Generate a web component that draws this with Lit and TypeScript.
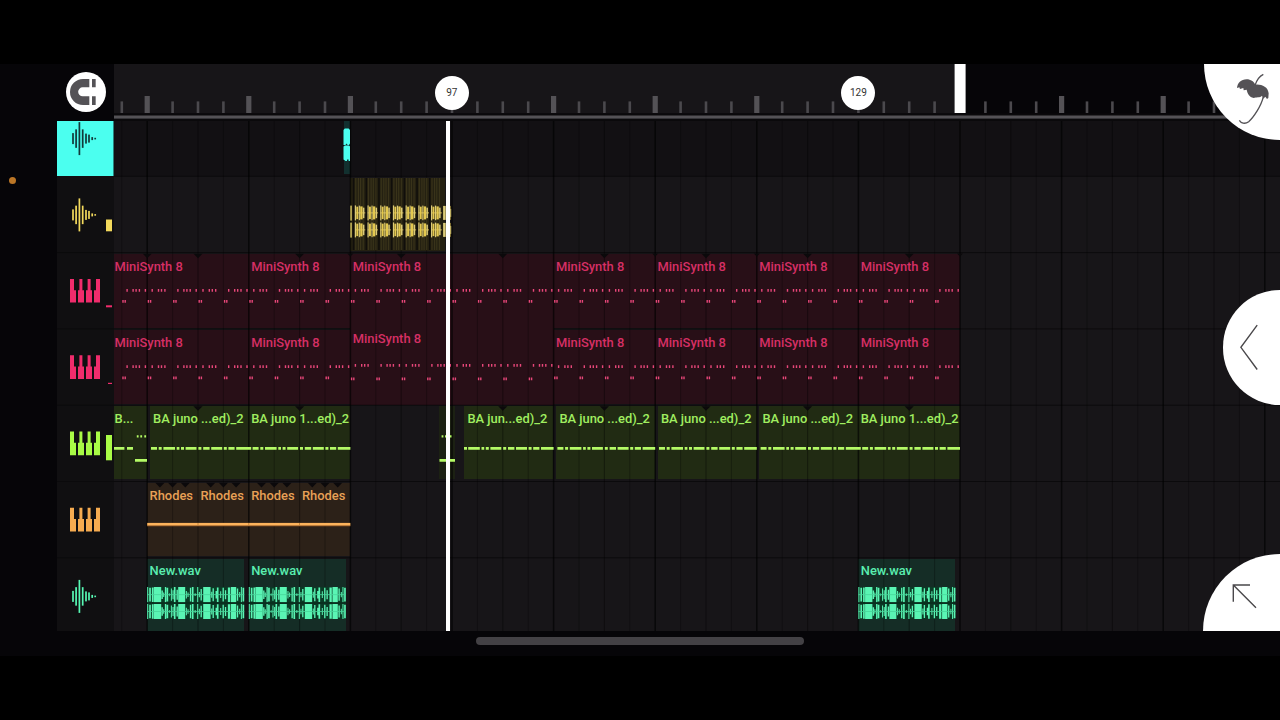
import { LitElement, html, svg, css } from "lit";
import { customElement } from "lit/decorators.js";

interface Clip { from: number; to: number; label?: string; pad?: number; lift?: boolean; dim?: boolean }
interface Track { kind: "wave" | "keys"; tone: string; color: string; clips: Clip[]; meter?: number[]; on?: boolean }

const LEFT = 114;
const ORIGIN = 147.2;
const BEAT = 25.4;
const bar = (n: number) => ORIGIN + n * BEAT * 4;

const synth = (lifted: boolean): Clip[] => [
  { from: LEFT, to: bar(1), label: "MiniSynth 8", pad: 0.5 },
  { from: bar(1), to: bar(2), label: "MiniSynth 8" },
  { from: bar(2), to: bar(4), label: "MiniSynth 8", lift: lifted },
  { from: bar(4), to: bar(5), label: "MiniSynth 8" },
  { from: bar(5), to: bar(6), label: "MiniSynth 8" },
  { from: bar(6), to: bar(7), label: "MiniSynth 8" },
  { from: bar(7), to: bar(8), label: "MiniSynth 8" },
];

const TRACKS: Track[] = [
  { kind: "wave", tone: "cyan", color: "#4bffef", on: true, clips: [{ from: 344, to: 350 }] },
  { kind: "wave", tone: "yellow", color: "#f3d95c", meter: [219.5, 11.8, 106, 6], clips: [{ from: 350.4, to: 445 }] },
  { kind: "keys", tone: "pink", color: "#f02c6c", meter: [305.3, 2, 106, 6], clips: synth(false) },
  { kind: "keys", tone: "pink", color: "#f02c6c", meter: [382.8, 1.2, 108, 4], clips: synth(true) },
  {
    kind: "keys", tone: "green", color: "#a9fb46", meter: [435, 25.3, 106, 6],
    clips: [
      { from: LEFT, to: 147, label: "B...", pad: 0.5 },
      { from: 150, to: bar(1), label: "BA juno ...ed)_2", pad: 3 },
      { from: bar(1), to: bar(2), label: "BA juno 1...ed)_2" },
      { from: 439.5, to: 455, dim: true },
      { from: 464, to: 553, label: "BA jun...ed)_2", pad: 3.4 },
      { from: 556.4, to: 655, label: "BA juno ...ed)_2", pad: 3 },
      { from: 658, to: 756.6, label: "BA juno ...ed)_2", pad: 3 },
      { from: 759.5, to: bar(7), label: "BA juno ...ed)_2", pad: 3 },
      { from: bar(7), to: bar(8), label: "BA juno 1...ed)_2" },
    ],
  },
  {
    kind: "keys", tone: "orange", color: "#f6ab50",
    clips: [0, 0.5, 1, 1.5].map((n) => ({ from: bar(n), to: bar(n + 0.5), label: "Rhodes" })),
  },
  {
    kind: "wave", tone: "teal", color: "#57f8b4",
    clips: [0, 1, 7].map((n) => ({ from: bar(n), to: bar(n) + 97, label: "New.wav" })),
  },
];

const rowLine = (i: number) => 176.3 + (i - 1) * 76.3;

/* start, width and relative amplitude of each burst, in thirds of a pixel */
const BURSTS = [
  [0, 3, 1], [6, 5, 0.9], [14, 5, 0.95], [20, 22, 1], [43, 4, 0.55], [48, 3, 0.3], [53, 4, 1], [58, 5, 0.9],
  [66, 2, 0.2], [71, 3, 0.8], [76, 3, 0.6], [80, 5, 1], [88, 4, 0.65], [93, 21, 1], [116, 3, 0.5], [121, 3, 0.3],
  [128, 4, 0.9], [134, 5, 1], [142, 4, 0.15], [150, 3, 1], [155, 3, 0.35], [160, 4, 0.75], [168, 22, 1],
  [192, 3, 0.4], [196, 4, 0.85], [205, 4, 0.5], [209, 5, 0.95], [219, 3, 0.45], [226, 4, 0.9], [233, 4, 0.6],
  [242, 7, 0.95], [251, 16, 1], [269, 4, 0.8], [276, 3, 0.35], [281, 3, 1], [286, 5, 0.9],
];
const TOP_NOTES = [5, 11.3, 14.3, 17.7, 30.7, 36.7, 39.7, 43, 49];

@customElement("app-root")
export class AppRoot extends LitElement {
  static styles = css`
    :host { display: block; width: 1280px; height: 720px; background: #000; overflow: hidden;
      font-family: Roboto, "Liberation Sans", sans-serif; }
    .screen { box-sizing: border-box; height: 720px; padding: 64px 0; }
    .app { position: relative; height: 592px; display: grid; grid-template-columns: 57px 57px 1fr;
      grid-template-rows: 57px 510px 25px; background: #060508; overflow: hidden; }
    .corner { grid-column: 2; display: flex; justify-content: center; align-items: flex-start; padding-top: 8px; }
    .magnet { width: 40px; height: 40px; border-radius: 50%; background: #fff; }
    svg { display: block; }
    .ruler { grid-column: 3; }
    .heads { grid-column: 2; grid-row: 2; }
    .lanes { grid-column: 3; grid-row: 2; display: grid; overflow: hidden; }
    .stack, .marks { grid-area: 1 / 1; }
    .stack { display: flex; flex-direction: column; min-height: 0; min-width: 0; }
    .lane { flex: none; height: 76.3px; display: flex; align-items: flex-start; background: #171518; }
    .lane.cyan { height: 55.3px; background: #121013; }
    .clip { box-sizing: border-box; flex: none; height: 73px; margin-top: 1.3px; overflow: hidden; }
    .lane.cyan .clip { height: 53px; margin-top: 0; }
    .label { position: relative; z-index: 1; display: block; white-space: nowrap; font-size: 12.9px; font-weight: 500;
      line-height: 16px; padding-top: 4.2px; }
    .pink .label, .orange .label { padding-top: 5px; }
    .pink .lift .label { padding-top: 4.2px; }
    .cyan .clip { background: #12302f; }
    .yellow .clip { background: #242011; }
    .pink .clip { background: #280f17; color: #d62f65; height: 74px; }
    .pink .clip.lift { height: 78px; margin-top: -2.3px; }
    .green .clip { background: #212b13; color: #a0ee60; }
    .green .clip.dim { background: #1c2113; }
    .orange .clip { background: #2c2118; color: #e8a056; }
    .teal .clip { background: #152d26; color: #5aeeb0; }
    .pill { position: absolute; top: 11.5px; width: 34px; height: 34px; border-radius: 50%; background: #fff;
      color: #333; font-size: 10px; line-height: 34px; text-align: center; }
    .p97 { left: 434.8px; }
    .p129 { left: 841.4px; }
    .playhead { position: absolute; left: 446px; top: 57px; width: 4px; height: 510px; background: #fff; }
    .home { grid-column: 1 / -1; grid-row: 3; justify-self: center; width: 328px; height: 8px; margin-top: 6px;
      border-radius: 4px; background: #434145; }
    .dot { position: absolute; left: 9px; top: 113px; width: 7px; height: 7px; border-radius: 50%; background: #bb7626; }
    .bubble { position: absolute; right: 0; background: #fff; overflow: hidden; }
    .palm { top: 0; width: 76px; height: 76px; border-bottom-left-radius: 76px; }
    .back { top: 225.5px; width: 57.5px; height: 115px; border-radius: 57.5px 0 0 57.5px; }
    .expand { top: 490px; width: 77px; height: 77px; border-top-left-radius: 77px; }
  `;

  private ruler() {
    const ticks = [];
    for (let k = -1; k < 44; k++) {
      const big = k % 4 === 0 && k !== 12 && k !== 28;
      const x = ORIGIN + k * BEAT;
      ticks.push(big
        ? svg`<rect x=${x - 2.6} y="96" width="5.2" height="17" fill="#545256"/>`
        : svg`<rect x=${x - 1.3} y="101.4" width="2.6" height="11.6" fill="#4b494d"/>`);
    }
    return html`<svg class="ruler" width="1166" height="57" viewBox="114 64 1166 57">
      <rect x="114" y="64" width="846" height="49.5" fill="#171518"/>
      <rect x="114" y="113.5" width="1166" height="7.5" fill="#0a090b"/>
      ${ticks}
      <rect x="114" y="115.5" width="1166" height="3.1" fill="#545256"/>
      <rect x="954.6" y="64" width="11" height="49" fill="#fff"/>
    </svg>`;
  }

  private icon(t: Track, i: number) {
    const cy = rowLine(i) + 38.6;
    if (t.kind === "keys") {
      const y = cy - 12.3;
      return svg`<path fill=${t.color} transform=${`translate(70 ${y})`}
        d="M0 0H4V11.3H6V23.7H0ZM9.4 0H12.4V11.3H14V23.7H8V11.3H9.4ZM17.6 0H20.6V11.3H22V23.7H16V11.3H17.6ZM26 0H30V23.7H24V11.3H26Z"/>`;
    }
    const bars = [[73, 11], [76.1, 18.5], [79.4, 33], [82.7, 18.5], [86, 10], [89, 8], [92.2, 3], [95.2, 1.6]];
    return bars.map(([x, h]) => svg`<rect x=${x - 0.85} y=${cy - h / 2} width="1.7" height=${h}
      fill=${t.on ? "#12393a" : t.color}/>`);
  }

  private heads() {
    return html`<svg class="heads" width="57" height="510" viewBox="57 121 57 510">
      <rect x="57" y="176" width="57" height="455" fill="#100f11"/>
      <rect x="57" y="121" width="56.5" height="55" fill="#4bffef"/>
      ${[2, 3, 4, 5, 6].map((i) => svg`<rect x="57" y=${rowLine(i) - 0.5} width="57" height="1" fill="#0b0a0c"/>`)}
      ${TRACKS.map((t, i) => svg`${this.icon(t, i)}${t.meter
        ? svg`<rect x=${t.meter[2]} y=${t.meter[0]} width=${t.meter[3]} height=${t.meter[1]} fill=${t.color}/>` : ""}`)}
    </svg>`;
  }

  private lane(t: Track) {
    let end = LEFT;
    return html`<div class="lane ${t.tone}">${t.clips.map((c) => {
      const gap = c.from - end;
      end = c.to;
      return html`<div class="clip ${c.lift ? "lift" : ""} ${c.dim ? "dim" : ""}"
        style="margin-left:${gap.toFixed(2)}px;width:${(c.to - c.from).toFixed(2)}px;padding-left:${c.label ? c.pad ?? 2.4 : 0}px"
        >${c.label ? html`<span class="label">${c.label}</span>` : ""}</div>`;
    })}</div>`;
  }

  private gridLines() {
    const out = [];
    for (let k = -1; k < 45; k++) {
      const x = ORIGIN + k * BEAT;
      const [w, o] = k % 4 === 0 ? [1.6, 0.62] : k % 2 === 0 ? [1.2, 0.34] : [1, 0.28];
      out.push(svg`<rect x=${x - w / 2} y="121" width=${w} height="510" fill="#000" opacity=${o}/>`);
    }
    for (let i = 1; i < 7; i++) {
      const y = rowLine(i);
      const split = i === 3;
      out.push(svg`<rect x="114" y=${y - 0.5} width=${split ? 236 : 1166} height="1" fill="#000" opacity=".5"/>`);
      if (split) out.push(svg`<rect x="554" y=${y - 0.5} width="726" height="1" fill="#000" opacity=".5"/>`);
    }
    return out;
  }

  private notches() {
    const tri = (x: number, y: number, s: number) =>
      svg`<path d=${`M${x - s} ${y}H${x + s}L${x} ${y + s}Z`} fill="#0b090b"/>`;
    const out = [0, 1, 3, 5, 7, 9, 11, 13, 15].map((n) => tri(bar(n / 2), 253.8, 4.4));
    [2, 5, 6, 8].forEach((n) => out.push(tri(bar(n), 253.6, 3)));
    [1, 3, 7, 9, 11, 13, 15].forEach((n) => out.push(tri(bar(n / 2), 406.2, 4.6)));
    for (let n = 0; n < 16; n++) if (n % 4) out.push(tri(ORIGIN + n * 12.7, 482.8, 4.6));
    return out;
  }

  private synthNotes() {
    let d = "";
    const dot = (x: number, y: number) => { if (x >= 113.5 && x < 959.5) d += `M${x.toFixed(1)} ${y}h1.4v2.8h-1.4z`; };
    for (let p = -1; p < 16; p++) {
      const base = ORIGIN + p * BEAT * 2;
      const raised = p >= 4 && p < 8;
      for (const o of TOP_NOTES) {
        dot(base + o - 0.7, 289);
        dot(base + o - 0.7, raised ? 364 : 365.2);
      }
      for (const o of [0.5, 2.7, 25.9, 28.1]) {
        dot(base + o, 300);
        dot(base + o, raised ? 377.4 : 376.4);
      }
    }
    return svg`<path d=${d} fill="#e8477a"/>`;
  }

  private bassNotes() {
    let d = "";
    const dash = (a: number, b: number, y = 447.1, h = 2.7) => { d += `M${a.toFixed(1)} ${y}H${b.toFixed(1)}v${h}H${a.toFixed(1)}z`; };
    dash(114, 124.4);
    dash(127, 133);
    dash(135, 147, 459.1);
    dash(439.5, 455, 459.1);
    for (const x of [136.8, 140.3, 144.3, 441.6, 445, 449.7]) dash(x, x + 1.8, 435.2, 2.4);
    const cells = [[3.8, 9.8], [11.5, 14.5], [16.2, 27.8], [29.5, 32.2], [33.8, 36.8], [38.4, 49.3], [51.2, 54.2],
      [56, 62.4], [64, 75], [76.6, 79.6], [81.2, 87.4], [89, 101.6]];
    [0, 1, 3, 4, 5, 6, 7].forEach((n) => {
      for (const [a, b] of cells) {
        const from = bar(n) + a;
        if (n === 3 && from < 464) continue;
        dash(from, bar(n) + b);
      }
      if (n === 1 || n === 7) dash(bar(n), bar(n) + 2.4);
    });
    dash(464, 467);
    return svg`<path d=${d} fill="#b4fa66"/>`;
  }

  private drums(x0: number) {
    let d = "";
    for (const cy of [594.7, 611.5]) {
      for (const [s, w, a] of BURSTS) {
        const h = 7.6 * a;
        d += `M${x0 + s / 3} ${cy - h}h${w / 3}v${2 * h}h${-w / 3}z`;
      }
    }
    return svg`<rect x=${x0} y="587" width="97" height="32" fill="#0a3a25"/>
      <path d=${d} fill="#5af5b4"/>
      <rect x=${x0} y="594.3" width="97" height=".8" fill="#48d69a"/><rect x=${x0} y="611.1" width="97" height=".8" fill="#48d69a"/>
      <rect x=${x0} y="602.4" width="97" height="1.2" fill="#0a2a1d"/>`;
  }

  private hats() {
    const out = [svg`<rect x="350.4" y="205.6" width="1.3" height="15" fill="#efdc6c"/><rect x="350.4" y="222.6" width="1.3" height="15" fill="#efdc6c"/>`];
    for (let g = 0; g < 8; g++) {
      const x = 355 + g * 12.7;
      if (g < 7) {
        out.push(svg`<rect x=${x - 2.2} y="178" width="1.5" height="72" fill="#100e0b"/>`);
        [0.2, 2.8, 5, 7.6].forEach((o) => out.push(svg`<rect x=${x + o} y="178" width="1.2" height="72" fill="#39331a"/>`));
      }
      for (const y of [205.4, 222.4]) {
        const hits = g < 7 ? [[0, 1.2, 15], [1.5, 1.9, 12.5], [4, 1.1, 14.6], [5.4, 2.4, 13], [8.1, 1.5, 10.5]]
          : [[-0.6, 2.6, 14], [2.4, 4.4, 14], [6.6, 0.9, 8]];
        if (g < 7) out.push(svg`<rect x=${x} y=${y + 6.8} width="10.6" height="1.3" fill="#a8923f"/>`);
        hits.forEach(([o, w, h], n) => out.push(svg`<rect x=${x + o - 0.2} y=${y + (15 - h) / 2} width=${w} height=${h}
          fill=${n % 2 ? "#e3c84f" : "#dccb78"}/>`));
      }
    }
    return out;
  }

  private marks() {
    return html`<svg class="marks" width="1166" height="510" viewBox="114 121 1166 510">
      ${this.gridLines()}${this.notches()}
      <path fill="#4bffef" d="M343.5 130L344.8 128.4H348.6L350 130V143.4L349 145H347.6L346.6 143.6L345.4 145H343.5ZM343.5 146.4L345 145.6H349L350 146.6V161H348.6V159.4H347V161H345.6L343.5 159.6Z"/>
      ${this.hats()}${this.synthNotes()}${this.bassNotes()}
      <rect x="147.2" y="525" width="203.2" height="1.4" fill="#7a471c"/>
      <rect x="147.2" y="522.9" width="203.2" height="2.6" fill="#fcb35c"/>
      ${[1, 2, 3].map((n) => svg`<rect x=${bar(n / 2) - 0.4} y="522.9" width=".8" height="2.6" fill="#b97a35"/>`)}
      ${[0, 1, 7].map((n) => this.drums(bar(n)))}
    </svg>`;
  }

  render() {
    return html`<div class="screen"><div class="app">
      <div class="corner"><div class="magnet"><svg width="40" height="40" viewBox="197 48 120 120" fill="#545256">
        <path d="M267 69H248A39 39 0 0 0 248 147H267V121H247A13.5 13.5 0 0 1 247 94H267Z"/>
        <path d="M275 69H286V94H275ZM275 121H286V147H275Z"/></svg></div></div>
      ${this.ruler()}${this.heads()}
      <div class="lanes"><div class="stack">${TRACKS.map((t) => this.lane(t))}</div>${this.marks()}</div>
      <div class="home"></div>
      <div class="dot"></div>
      <div class="playhead"></div>
      <div class="pill p97">97</div>
      <div class="pill p129">129</div>
      <div class="bubble palm"><svg width="76" height="76" viewBox="1092 24 228 228">
        <path fill="#545256" d="M1191 96C1192 82 1203 70 1220 70C1232 70 1242 77 1246 86C1264 84 1284 92 1286 112L1285 126L1281 129L1276 122L1270 128L1266 119C1260 126 1248 122 1241 126C1228 123 1222 112 1220 101L1211 103L1210 96L1200 99L1198 94Z"/>
        <path fill="none" stroke="#545256" stroke-width="4" d="M1245 88C1250 72 1260 60 1270 55M1270 122C1264 150 1240 185 1226 197C1214 206 1203 201 1198 193"/></svg></div>
      <div class="bubble back"><svg width="58" height="115" viewBox="1222.5 289.5 58 115">
        <path d="M1256.7 324.7L1240.4 346.8L1256.7 369" fill="none" stroke="#4a484b" stroke-width="1.4"/></svg></div>
      <div class="bubble expand"><svg width="77" height="77" viewBox="1203 554 77 77">
        <path d="M1233.3 601.7V585H1250M1233.3 585L1256 607.7" fill="none" stroke="#4a484b" stroke-width="1.4"/></svg></div>
    </div></div>`;
  }
}
